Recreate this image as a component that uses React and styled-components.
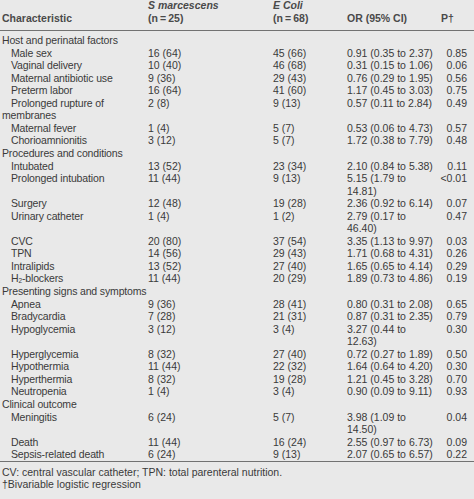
import React from 'react';
import styled, { createGlobalStyle } from 'styled-components';

const GlobalStyle = createGlobalStyle`
  html, body {
    margin: 0;
    padding: 0;
    background: #e9e9e9;
  }
  body {
    font-family: "Liberation Sans", Arial, sans-serif;
    color: #3a3a3a;
  }
`;

const Page = styled.div`
  width: 474px;
  height: 499px;
  overflow: hidden;
  background: #e9e9e9;
  margin-top: -1px;
`;

const Table = styled.table`
  width: 474px;
  table-layout: fixed;
  border-collapse: collapse;
  font-size: 10.5px;
  line-height: 12.55px;
  border-bottom: 1.5px solid #727272;
`;

const HeadCell = styled.th`
  text-align: left;
  vertical-align: bottom;
  font-weight: 700;
  color: #4a4a4a;
  padding: 0 0 6px ${({ $pad }) => $pad || 2}px;
  border-bottom: 1.5px solid #727272;
  white-space: nowrap;
`;

const Italic = styled.span`
  display: block;
  font-style: italic;
`;

const Cell = styled.td`
  vertical-align: top;
  padding: ${({ $first }) => ($first ? '3px' : '0')} 0 0 2px;
  white-space: pre-line;
`;

const LabelCell = styled(Cell)`
  text-indent: ${({ $indent }) => ($indent ? '9px' : '0')};
  letter-spacing: -0.15px;
`;

const PCell = styled(Cell)`
  text-align: right;
  padding-right: 7px;
  white-space: nowrap;
`;

const Footer = styled.div`
  padding: 4px 0 0 2px;
  font-size: 10.5px;
  line-height: 12px;
  display: flex;
  flex-direction: column;
`;

const Sub = styled.span`
  font-size: 6.5px;
  line-height: 0;
  vertical-align: -1px;
`;

const sections = [
  {
    title: 'Host and perinatal factors',
    rows: [
      ['Male sex', '16 (64)', '45 (66)', '0.91 (0.35 to 2.37)', '0.85'],
      ['Vaginal delivery', '10 (40)', '46 (68)', '0.31 (0.15 to 1.06)', '0.06'],
      ['Maternal antibiotic use', '9 (36)', '29 (43)', '0.76 (0.29 to 1.95)', '0.56'],
      ['Preterm labor', '16 (64)', '41 (60)', '1.17 (0.45 to 3.03)', '0.75'],
      ['Prolonged rupture of\nmembranes', '2 (8)', '9 (13)', '0.57 (0.11 to 2.84)', '0.49'],
      ['Maternal fever', '1 (4)', '5 (7)', '0.53 (0.06 to 4.73)', '0.57'],
      ['Chorioamnionitis', '3 (12)', '5 (7)', '1.72 (0.38 to 7.79)', '0.48'],
    ],
  },
  {
    title: 'Procedures and conditions',
    rows: [
      ['Intubated', '13 (52)', '23 (34)', '2.10 (0.84 to 5.38)', '0.11'],
      ['Prolonged intubation', '11 (44)', '9 (13)', '5.15 (1.79 to\n14.81)', '<0.01'],
      ['Surgery', '12 (48)', '19 (28)', '2.36 (0.92 to 6.14)', '0.07'],
      ['Urinary catheter', '1 (4)', '1 (2)', '2.79 (0.17 to\n46.40)', '0.47'],
      ['CVC', '20 (80)', '37 (54)', '3.35 (1.13 to 9.97)', '0.03'],
      ['TPN', '14 (56)', '29 (43)', '1.71 (0.68 to 4.31)', '0.26'],
      ['Intralipids', '13 (52)', '27 (40)', '1.65 (0.65 to 4.14)', '0.29'],
      ['H2-blockers', '11 (44)', '20 (29)', '1.89 (0.73 to 4.86)', '0.19'],
    ],
  },
  {
    title: 'Presenting signs and symptoms',
    rows: [
      ['Apnea', '9 (36)', '28 (41)', '0.80 (0.31 to 2.08)', '0.65'],
      ['Bradycardia', '7 (28)', '21 (31)', '0.87 (0.31 to 2.35)', '0.79'],
      ['Hypoglycemia', '3 (12)', '3 (4)', '3.27 (0.44 to\n12.63)', '0.30'],
      ['Hyperglycemia', '8 (32)', '27 (40)', '0.72 (0.27 to 1.89)', '0.50'],
      ['Hypothermia', '11 (44)', '22 (32)', '1.64 (0.64 to 4.20)', '0.30'],
      ['Hyperthermia', '8 (32)', '19 (28)', '1.21 (0.45 to 3.28)', '0.70'],
      ['Neutropenia', '1 (4)', '3 (4)', '0.90 (0.09 to 9.11)', '0.93'],
    ],
  },
  {
    title: 'Clinical outcome',
    rows: [
      ['Meningitis', '6 (24)', '5 (7)', '3.98 (1.09 to\n14.50)', '0.04'],
      ['Death', '11 (44)', '16 (24)', '2.55 (0.97 to 6.73)', '0.09'],
      ['Sepsis-related death', '6 (24)', '9 (13)', '2.07 (0.65 to 6.57)', '0.22'],
    ],
  },
];

const renderLabel = (label) =>
  label === 'H2-blockers' ? (
    <>
      H<Sub>2</Sub>-blockers
    </>
  ) : (
    label
  );

const App = () => (
  <>
    <GlobalStyle />
    <Page>
      <Table>
        <colgroup>
          <col style={{ width: 146 }} />
          <col style={{ width: 125 }} />
          <col style={{ width: 74 }} />
          <col style={{ width: 91 }} />
          <col style={{ width: 38 }} />
        </colgroup>
        <thead>
          <tr>
            <HeadCell>Characteristic</HeadCell>
            <HeadCell>
              <Italic>S marcescens</Italic>
              (n&thinsp;=&thinsp;25)
            </HeadCell>
            <HeadCell>
              <Italic>E Coli</Italic>
              (n&thinsp;=&thinsp;68)
            </HeadCell>
            <HeadCell>OR (95% CI)</HeadCell>
            <HeadCell $pad={5}>P†</HeadCell>
          </tr>
        </thead>
        <tbody>
          {sections.map((section, si) => (
            <React.Fragment key={section.title}>
              <tr>
                <LabelCell colSpan={5} $first={si === 0}>
                  {section.title}
                </LabelCell>
              </tr>
              {section.rows.map(([label, s, e, or, p]) => (
                <tr key={label}>
                  <LabelCell $indent>{renderLabel(label)}</LabelCell>
                  <Cell>{s}</Cell>
                  <Cell>{e}</Cell>
                  <Cell>{or}</Cell>
                  <PCell>{p}</PCell>
                </tr>
              ))}
            </React.Fragment>
          ))}
        </tbody>
      </Table>
      <Footer>
        <span>CV: central vascular catheter; TPN: total parenteral nutrition.</span>
        <span>†Bivariable logistic regression</span>
      </Footer>
    </Page>
  </>
);

export default App;
